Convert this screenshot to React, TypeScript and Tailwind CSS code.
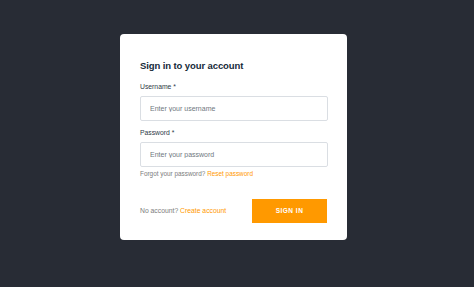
export default function App() {
  return (
    <div
      className="h-[287px] w-[474px] bg-[#282c35] pt-[34px] pl-[120px]"
      style={{ fontFamily: '"Liberation Sans", Arial, sans-serif' }}
    >
      <div className="h-[206px] w-[227px] rounded-[4px] bg-white px-[20px] pt-[26px]">
        <h2 className="text-[9.5px] font-bold leading-[12px] tracking-[-0.1px] text-[#152939]">
          Sign in to your account
        </h2>

        <div className="mt-[10px]">
          <label className="block text-[6.8px] leading-[10px] text-[#2e3a47]">Username *</label>
          <input
            className="mt-[4px] h-[25px] w-[188px] rounded-[2px] border border-[#dadee3] bg-white px-[9px] text-[7px] text-[#152939] outline-none placeholder:text-[#6f7780]"
            placeholder="Enter your username"
          />
        </div>

        <div className="mt-[7px]">
          <label className="block text-[6.8px] leading-[10px] text-[#2e3a47]">Password *</label>
          <input
            type="password"
            className="mt-[4px] h-[25px] w-[188px] rounded-[2px] border border-[#dadee3] bg-white px-[9px] text-[7px] text-[#152939] outline-none placeholder:text-[#6f7780]"
            placeholder="Enter your password"
          />
          <p className="mt-[3px] text-[6.4px] leading-[8px] text-[#7c7c7c]">
            Forgot your password? <a className="text-[#ff9900]">Reset password</a>
          </p>
        </div>

        <div className="mt-[21px] flex items-center justify-between">
          <span className="text-[6.8px] text-[#7c7c7c]">
            No account? <a className="text-[#ff9900]">Create account</a>
          </span>
          <button className="h-[24px] w-[75px] bg-[#ff9900] text-[6.5px] font-bold tracking-[0.5px] text-white">
            SIGN IN
          </button>
        </div>
      </div>
    </div>
  )
}
